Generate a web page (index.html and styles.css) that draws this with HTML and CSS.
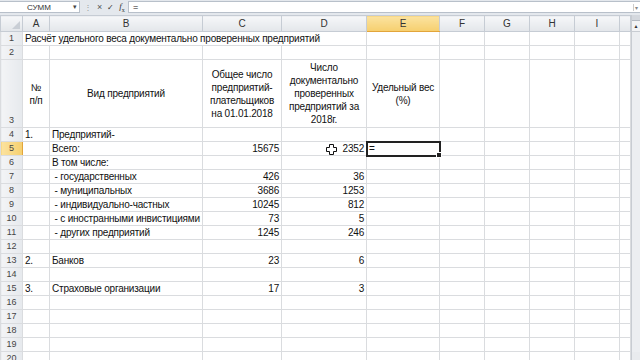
FILE: index.html
```html
<!DOCTYPE html>
<html lang="ru">
<head>
    <meta charset="UTF-8">
    <title>Удельный вес</title>
    <link rel="stylesheet" href="styles.css">
</head>
<body>
    <!-- Строка формул -->
    <div class="formula-bar">
        <div class="name-box">
            <span class="name-text">СУММ</span>
            <span class="drop">&#9662;</span>
        </div>
        <div class="fx-buttons">
            <span class="grip">&#8942;</span>
            <span class="btn-x">&#215;</span>
            <span class="btn-ok">&#10003;</span>
            <span class="btn-fx"><i>f</i><sub>x</sub></span>
        </div>
        <div class="formula-input">=<span class="drop small">&#9662;</span></div>
    </div>

    <div class="sheet-wrap">
        <table class="sheet">
            <colgroup>
                <col class="c-rh"><col class="c-a"><col class="c-b"><col class="c-c"><col class="c-d">
                <col class="c-e"><col class="c-f"><col class="c-g"><col class="c-h"><col class="c-i"><col class="c-j">
            </colgroup>
            <tr class="hdr">
                <th class="corner"><span class="tri"></span></th>
                <th>A</th><th>B</th><th>C</th><th>D</th><th class="sel">E</th><th>F</th><th>G</th><th>H</th><th>I</th><th></th>
            </tr>
            <tr>
                <th class="rh">1</th>
                <td colspan="4" class="nowrap">Расчёт удельного веса документально проверенных предприятий</td>
                <td></td><td></td><td></td><td></td><td></td><td></td>
            </tr>
            <tr>
                <th class="rh">2</th>
                <td></td><td></td><td></td><td></td><td></td><td></td><td></td><td></td><td></td><td></td>
            </tr>
            <tr class="tall">
                <th class="rh bottom">3</th>
                <td class="center">№<br>п/п</td>
                <td class="center">Вид предприятий</td>
                <td class="center">Общее число<br>предприятий-<br>плательщиков<br>на 01.01.2018</td>
                <td class="center">Число<br>документально<br>проверенных<br>предприятий за<br>2018г.</td>
                <td class="center">Удельный вес<br>(%)</td>
                <td></td><td></td><td></td><td></td><td></td>
            </tr>
            <tr>
                <th class="rh">4</th>
                <td>1.</td><td>Предприятий-</td><td></td><td></td><td></td><td></td><td></td><td></td><td></td><td></td>
            </tr>
            <tr>
                <th class="rh sel">5</th>
                <td></td><td>Всего:</td><td class="num">15675</td>
                <td class="num cursor-cell">2352
                    <svg class="cursor" width="11" height="11" viewBox="0 0 11 11">
                        <path d="M3.5 0.5h4v3h3v4h-3v3h-4v-3h-3v-4h3z" fill="#fff" stroke="#111" stroke-width="1"/>
                    </svg>
                </td>
                <td class="active">=</td>
                <td></td><td></td><td></td><td></td><td></td>
            </tr>
            <tr>
                <th class="rh">6</th>
                <td></td><td>В том числе:</td><td></td><td></td><td></td><td></td><td></td><td></td><td></td><td></td>
            </tr>
            <tr>
                <th class="rh">7</th>
                <td></td><td>&nbsp;- государственных</td><td class="num">426</td><td class="num">36</td>
                <td></td><td></td><td></td><td></td><td></td><td></td>
            </tr>
            <tr>
                <th class="rh">8</th>
                <td></td><td>&nbsp;- муниципальных</td><td class="num">3686</td><td class="num">1253</td>
                <td></td><td></td><td></td><td></td><td></td><td></td>
            </tr>
            <tr>
                <th class="rh">9</th>
                <td></td><td>&nbsp;- индивидуально-частных</td><td class="num">10245</td><td class="num">812</td>
                <td></td><td></td><td></td><td></td><td></td><td></td>
            </tr>
            <tr>
                <th class="rh">10</th>
                <td></td><td class="nowrap">&nbsp;- с иностранными инвистициями</td><td class="num">73</td><td class="num">5</td>
                <td></td><td></td><td></td><td></td><td></td><td></td>
            </tr>
            <tr>
                <th class="rh">11</th>
                <td></td><td>&nbsp;- других предприятий</td><td class="num">1245</td><td class="num">246</td>
                <td></td><td></td><td></td><td></td><td></td><td></td>
            </tr>
            <tr>
                <th class="rh">12</th>
                <td></td><td></td><td></td><td></td><td></td><td></td><td></td><td></td><td></td><td></td>
            </tr>
            <tr>
                <th class="rh">13</th>
                <td>2.</td><td>Банков</td><td class="num">23</td><td class="num">6</td>
                <td></td><td></td><td></td><td></td><td></td><td></td>
            </tr>
            <tr>
                <th class="rh">14</th>
                <td></td><td></td><td></td><td></td><td></td><td></td><td></td><td></td><td></td><td></td>
            </tr>
            <tr>
                <th class="rh">15</th>
                <td>3.</td><td>Страховые организации</td><td class="num">17</td><td class="num">3</td>
                <td></td><td></td><td></td><td></td><td></td><td></td>
            </tr>
            <tr>
                <th class="rh">16</th>
                <td></td><td></td><td></td><td></td><td></td><td></td><td></td><td></td><td></td><td></td>
            </tr>
            <tr>
                <th class="rh">17</th>
                <td></td><td></td><td></td><td></td><td></td><td></td><td></td><td></td><td></td><td></td>
            </tr>
            <tr>
                <th class="rh">18</th>
                <td></td><td></td><td></td><td></td><td></td><td></td><td></td><td></td><td></td><td></td>
            </tr>
            <tr>
                <th class="rh">19</th>
                <td></td><td></td><td></td><td></td><td></td><td></td><td></td><td></td><td></td><td></td>
            </tr>
            <tr>
                <th class="rh">20</th>
                <td></td><td></td><td></td><td></td><td></td><td></td><td></td><td></td><td></td><td></td>
            </tr>
        </table>

        <!-- Вертикальная прокрутка -->
        <div class="vscroll">
            <div class="split"></div>
            <div class="arrow-up">&#9650;</div>
            <div class="track"></div>
        </div>
    </div>
</body>
</html>
```

FILE: styles.css
```css
body {
    margin: 0;
    width: 640px;
    height: 360px;
    overflow: hidden;
    background: #fff;
    font-family: "Liberation Sans", Arial, sans-serif;
    font-size: 10px;
    color: #111;
}
.formula-bar {
    display: flex;
    align-items: stretch;
    height: 15px;
    background: #e4e8ed;
    box-sizing: border-box;
    padding: 1px 0 2px 0;
}
.name-box {
    width: 80px;
    display: flex;
    align-items: center;
    background: #fff;
    border: 1px solid #b8c0ca;
    border-left: none;
    box-sizing: border-box;
    font-size: 8px;
    color: #333;
}
.name-text {
    flex: 1;
    padding-left: 27px;
}
.drop {
    font-size: 7px;
    color: #444;
    padding-right: 2px;
}
.fx-buttons {
    width: 44px;
    display: flex;
    align-items: center;
    gap: 5px;
    padding-left: 4px;
    font-size: 9px;
    color: #444;
}
.grip {
    color: #999;
    font-size: 8px;
}
.btn-x {
    color: #555;
}
.btn-ok {
    color: #333;
    font-size: 8px;
}
.btn-fx {
    font-family: "Liberation Serif", serif;
    font-size: 9px;
    color: #333;
}
.btn-fx sub {
    font-size: 6px;
}
.formula-input {
    flex: 1;
    display: flex;
    align-items: center;
    justify-content: space-between;
    background: #fff;
    border: 1px solid #b8c0ca;
    border-right: none;
    padding-left: 4px;
    font-size: 9px;
}
.drop.small {
    font-size: 6px;
    color: #888;
    padding-right: 2px;
    border-left: 1px solid #ccc;
    padding-left: 1px;
}

.sheet-wrap {
    display: flex;
    align-items: flex-start;
}
.sheet {
    border-collapse: collapse;
    table-layout: fixed;
    width: 630px;
}
.c-rh { width: 22px; }
.c-a { width: 27px; }
.c-b { width: 153px; }
.c-c { width: 79px; }
.c-d { width: 85px; }
.c-e { width: 73px; }
.c-f { width: 45px; }
.c-g { width: 45px; }
.c-h { width: 45px; }
.c-i { width: 45px; }
.c-j { width: 11px; }

.sheet td, .sheet th {
    height: 13px;
    padding: 0 2px;
    border: 1px solid #dadcdf;
    line-height: 13px;
    white-space: nowrap;
    overflow: hidden;
    font-weight: normal;
}
.sheet td {
    overflow: visible;
    letter-spacing: -0.2px;
}
.hdr th {
    height: 15px;
    background: linear-gradient(#f6f7f9, #e3e6ea);
    border: 1px solid #c6ccd4;
    color: #333;
    text-align: center;
    font-size: 10px;
}
.hdr th.sel {
    background: linear-gradient(#fbe3a0, #f6cf6e);
    border-bottom: 1px solid #e2a53b;
}
.corner {
    position: relative;
}
.tri {
    position: absolute;
    right: 2px;
    bottom: 2px;
    width: 0;
    height: 0;
    border-left: 8px solid transparent;
    border-bottom: 8px solid #c9ced5;
}
.rh {
    background: linear-gradient(90deg, #f3f4f6, #e6e9ed);
    border: 1px solid #c6ccd4;
    color: #444;
    text-align: center;
    vertical-align: bottom;
    font-size: 9px;
    padding: 0;
}
.rh.sel {
    background: linear-gradient(90deg, #fbe3a0, #f6cf6e);
    border-right: 1px solid #e2a53b;
}
.tall td, .tall th {
    height: 67px;
}
.center {
    text-align: center;
    vertical-align: middle;
    line-height: 13.5px;
}
.num {
    text-align: right;
}
.cursor-cell {
    position: relative;
}
.cursor {
    position: absolute;
    left: 44px;
    top: 2px;
}
.active {
    position: relative;
    outline: 2px solid #222;
    outline-offset: -1px;
}
.active::after {
    content: "";
    position: absolute;
    right: -3px;
    bottom: -3px;
    width: 4px;
    height: 4px;
    background: #222;
    border: 1px solid #fff;
}

.vscroll {
    width: 10px;
    height: 345px;
    background: #e9ebee;
    border-left: 1px solid #c8ccd2;
    box-sizing: border-box;
}
.split {
    height: 5px;
    background: #d4d8de;
    border-bottom: 1px solid #b4bac2;
}
.arrow-up {
    height: 10px;
    font-size: 5px;
    line-height: 10px;
    text-align: center;
    color: #333;
    background: #f2f3f5;
    border-bottom: 1px solid #c8ccd2;
}
.track {
    height: 320px;
    background: #eceef1;
}
```
